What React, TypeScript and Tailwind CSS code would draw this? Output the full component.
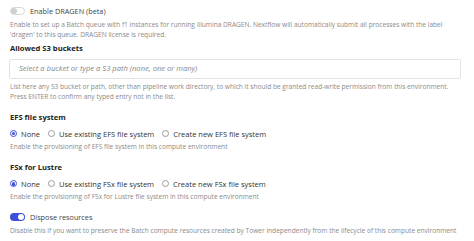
import React from "react";

function Toggle({ on }: { on: boolean }) {
  return on ? (
    <span className="relative inline-block w-[15px] h-[8px] rounded-full bg-[#3d4ed8]">
      <span className="absolute right-[1px] top-[1px] w-[6px] h-[6px] rounded-full bg-white" />
    </span>
  ) : (
    <span className="relative inline-block w-[15px] h-[8px] rounded-full bg-white border border-[#d8d8d8]">
      <span className="absolute left-0 top-0 w-[6px] h-[6px] rounded-full bg-[#cfcfcf]" />
    </span>
  );
}

function Radio({ checked }: { checked?: boolean }) {
  return checked ? (
    <span className="inline-flex items-center justify-center w-[7px] h-[7px] rounded-full border border-[#3d4ed8] bg-white">
      <span className="w-[3.5px] h-[3.5px] rounded-full bg-[#3d4ed8]" />
    </span>
  ) : (
    <span className="inline-block w-[7px] h-[7px] rounded-full border border-[#9a9a9a] bg-white" />
  );
}

function RadioRow({ kind }: { kind: string }) {
  return (
    <div className="flex items-center h-[10px] text-[7.5px] text-[#333] leading-[10px]">
      <label className="flex items-center gap-[4px]">
        <Radio checked />
        <span>None</span>
      </label>
      <label className="flex items-center gap-[4px] ml-[8px]">
        <Radio />
        <span>Use existing {kind} file system</span>
      </label>
      <label className="flex items-center gap-[4px] ml-[8px]">
        <Radio />
        <span>Create new {kind} file system</span>
      </label>
    </div>
  );
}

export default function App() {
  const desc = "text-[6.6px] leading-[10px] text-[#8a8a8a] whitespace-nowrap";
  const head = "text-[7.6px] font-bold text-[#222] leading-[10px]";
  return (
    <div
      className="w-[474px] h-[241px] bg-white px-[10px] pt-[6px] overflow-hidden"
      style={{ fontFamily: '"Open Sans", "Noto Sans", sans-serif' }}
    >
      <div className="flex items-center gap-[5px] h-[10px]">
        <Toggle on={false} />
        <span className="text-[7.3px] text-[#444] leading-[10px]">Enable DRAGEN (beta)</span>
      </div>
      <p className={`${desc} mt-[3.5px]`}>
        Enable to set up a Batch queue with f1 instances for running Illumina DRAGEN. Nextflow will automatically submit all processes with the label
        <br />
        'dragen' to this queue. DRAGEN license is required.
      </p>
      <div className={`${head} mt-[3.8px]`}>Allowed S3 buckets</div>
      <div className="mt-[5.7px] -ml-[1px] w-[452px] h-[20px] border border-[#e2e2e2] rounded-[2px] flex items-center px-[9px]">
        <span className="text-[7.6px] italic text-[#888]">Select a bucket or type a S3 path (none, one or many)</span>
      </div>
      <p className={`${desc} mt-[2.7px]`}>
        List here any S3 bucket or path, other than pipeline work directory, to which it should be granted read-write permission from this environment.
        <br />
        Press ENTER to confirm any typed entry not in the list.
      </p>
      <div className={`${head} mt-[10.6px]`}>EFS file system</div>
      <div className="mt-[6.4px]">
        <RadioRow kind="EFS" />
      </div>
      <p className={`${desc} mt-[3.6px]`}>Enable the provisioning of EFS file system in this compute environment</p>
      <div className={`${head} mt-[10px]`}>FSx for Lustre</div>
      <div className="mt-[6.7px]">
        <RadioRow kind="FSx" />
      </div>
      <p className={`${desc} mt-[2.7px]`}>Enable the provisioning of FSx for Lustre file system in this compute environment</p>
      <div className="flex items-center gap-[5px] h-[10px] mt-[10px]">
        <Toggle on />
        <span className="text-[7.3px] text-[#444] leading-[10px]">Dispose resources</span>
      </div>
      <p className={`${desc} mt-[4.3px]`}>
        Disable this if you want to preserve the Batch compute resources created by Tower independently from the lifecycle of this compute environment
      </p>
    </div>
  );
}
